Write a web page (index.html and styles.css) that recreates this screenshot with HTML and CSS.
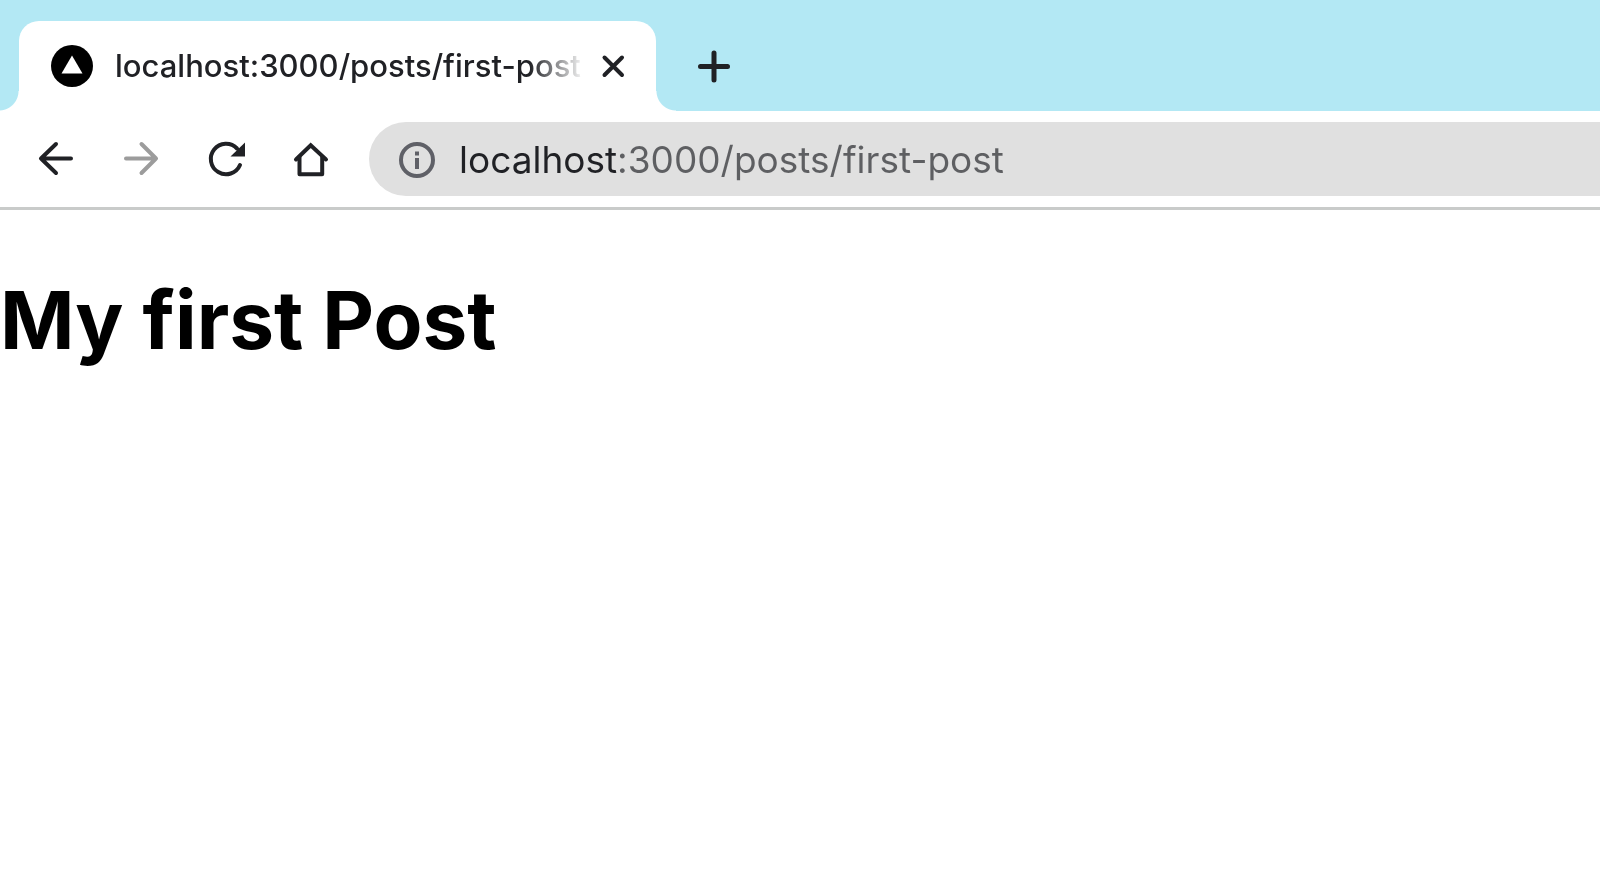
FILE: index.html
```html
<!DOCTYPE html>
<html lang="en">
<head>
    <meta charset="UTF-8">
    <meta name="viewport" content="width=device-width, initial-scale=1.0">
    <title>localhost:3000/posts/first-post</title>
    <link rel="stylesheet" href="styles.css">
</head>
<body>
    <!-- Tab strip -->
    <div class="tab-strip">
        <div class="tab">
            <svg class="favicon" viewBox="0 0 42 42" aria-hidden="true">
                <circle cx="21" cy="21" r="21"/>
                <path d="M21 10.5L31.5 28.5H10.5Z" fill="#fff"/>
            </svg>
            <span class="tab-title">localhost:3000/posts/first-post</span>
            <button class="tab-close" aria-label="Close tab">
                <svg class="icon" viewBox="0 0 40 40"><path d="M11.5 11.5L29 29M29 11.5L11.5 29"/></svg>
            </button>
        </div>
        <button class="new-tab" aria-label="New tab">
            <svg class="icon icon-plus" viewBox="0 0 40 40"><path d="M20 7V34M6.5 20.5H33.5"/></svg>
        </button>
    </div>

    <!-- Toolbar -->
    <div class="toolbar">
        <div class="nav-buttons">
            <button aria-label="Back">
                <svg class="icon" viewBox="0 0 40 40"><path d="M35 19.5H5M20 5L5 19.5L20 34"/></svg>
            </button>
            <button aria-label="Forward" disabled>
                <svg class="icon" viewBox="0 0 40 40"><path d="M5 19.5H35M20.5 5L35 19.5L20.5 34"/></svg>
            </button>
            <button aria-label="Reload">
                <svg class="icon" viewBox="0 0 40 40">
                    <path d="M31 9.5A15.2 15.2 0 1 0 34 26"/>
                    <path class="solid" d="M39 3.5V17.5H24.5Z"/>
                </svg>
            </button>
            <button aria-label="Home">
                <svg class="icon" viewBox="0 0 40 40">
                    <path class="miter" d="M5 20.5L19.7 6.2L35 20.5"/>
                    <path d="M8.5 18V35.2H31.2V18"/>
                </svg>
            </button>
        </div>
        <div class="address-bar">
            <svg class="info" viewBox="0 0 36 36" aria-hidden="true">
                <circle cx="18" cy="18" r="16"/>
                <path d="M18 9.5V13.5M18 16V27"/>
            </svg>
            <input class="address" type="text" value="localhost:3000/posts/first-post" aria-label="Address" spellcheck="false">
        </div>
    </div>

    <!-- Page content -->
    <main>
        <h1>My first Post</h1>
    </main>
</body>
</html>
```
FILE: styles.css
```css
body {
    margin: 0;
    background-color: #fff;
    color: #000;
    font-family: Inter, "Liberation Sans", sans-serif;
}

button {
    display: flex;
    padding: 0;
    border: none;
    background: none;
    color: #202125;
    cursor: pointer;
}

button:disabled {
    color: #9c9c9c;
    cursor: default;
}

/* Icons */
.icon {
    width: 40px;
    height: 40px;
    fill: none;
    stroke: currentColor;
    stroke-width: 4;
    stroke-linecap: round;
    stroke-linejoin: round;
}

.icon .solid {
    fill: currentColor;
    stroke: none;
}

.icon .miter {
    stroke-linejoin: miter;
}

.icon-plus {
    stroke-width: 5;
}

/* Tab strip */
.tab-strip {
    display: flex;
    align-items: center;
    gap: 38px;
    height: 90px;
    padding: 21px 19px 0;
    background-color: #b3e8f4;
}

.tab {
    position: relative;
    display: flex;
    align-items: center;
    box-sizing: border-box;
    width: 637px;
    height: 90px;
    padding: 0 23px 0 32px;
    border-radius: 20px 20px 0 0;
    background-color: #fff;
}

/* Curved feet of the active tab */
.tab::before,
.tab::after {
    content: "";
    position: absolute;
    bottom: 0;
    width: 20px;
    height: 20px;
}

.tab::before {
    right: 100%;
    background: radial-gradient(circle at 0 0, transparent 19px, #fff 20px);
}

.tab::after {
    left: 100%;
    background: radial-gradient(circle at 100% 0, transparent 19px, #fff 20px);
}

.favicon {
    flex: none;
    width: 42px;
    height: 42px;
}

.tab-title {
    flex: 1;
    margin: 0 8px 0 22px;
    color: #202125;
    font-size: 31px;
    font-weight: 500;
    line-height: 40px;
    white-space: nowrap;
    -webkit-mask-image: linear-gradient(to left, transparent, #000 56px);
    mask-image: linear-gradient(to left, transparent, #000 56px);
}

/* Toolbar */
.toolbar {
    display: flex;
    align-items: center;
    gap: 38px;
    padding: 11px 0 11px 36px;
    border-bottom: 3px solid #c9cbca;
}

.nav-buttons {
    display: flex;
    gap: 45px;
}

.address-bar {
    display: flex;
    flex: 1;
    align-items: center;
    gap: 24px;
    box-sizing: border-box;
    height: 74px;
    padding: 2px 0 0 30px;
    border-radius: 37px 0 0 37px;
    background-color: #e0e0e0;
}

.info {
    flex: none;
    width: 36px;
    height: 36px;
    fill: none;
    stroke: #5f6067;
    stroke-width: 4;
}

/* Host is dark, the rest of the address is grey */
.address {
    flex: 1;
    min-width: 0;
    padding: 0;
    border: none;
    outline: none;
    background: linear-gradient(to right, #202125 158px, #5e5f62 158px);
    -webkit-background-clip: text;
    background-clip: text;
    color: transparent;
    caret-color: #202125;
    font-family: inherit;
    font-size: 37px;
    line-height: 46px;
}

/* Page content */
h1 {
    margin: 60px 0;
    font-size: 80px;
    font-weight: 700;
    line-height: 100px;
}
```
